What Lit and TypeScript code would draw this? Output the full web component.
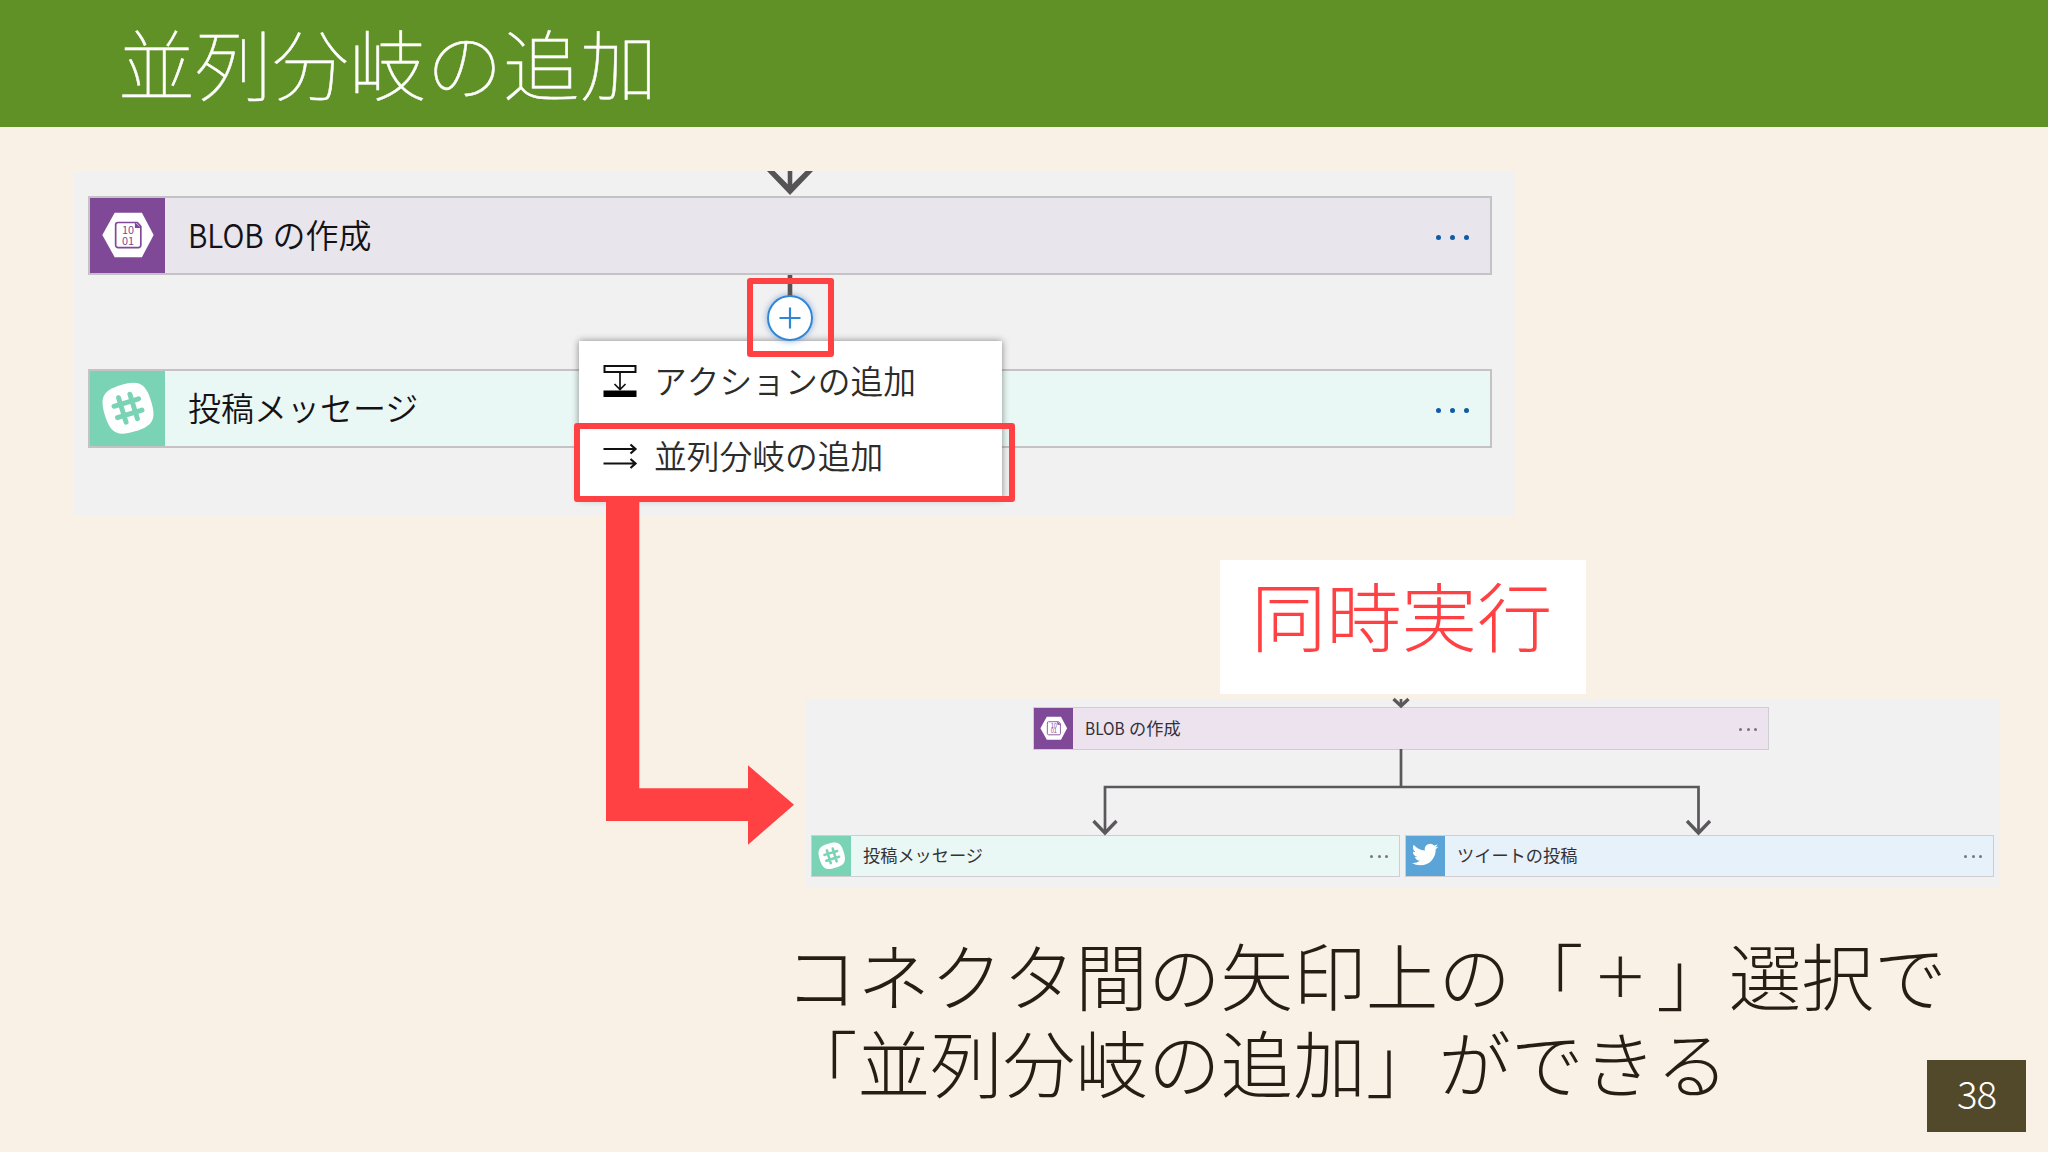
import { LitElement, html, css } from "lit";
import { customElement, property } from "lit/decorators.js";

const blobIcon = html`<svg viewBox="0 0 76 76">
  <path d="M12.500 37.500 25 15h27.600L64.500 37.500 52.600 60H25z" fill="#fff"/>
  <path d="M28.500 24.800h19.500l3.500 4v19a2.500 2.500 0 0 1-2.500 2.500h-20.500a2.500 2.500 0 0 1-2.500-2.500v-20.500a2.500 2.500 0 0 1 2.500-2.500z" fill="none" stroke="#804998" stroke-width="1.700"/>
  <path d="M45.500 24.500v6h6.500z" fill="#804998"/>
  <text x="38.500" y="36.500" class="bits">10</text>
  <text x="38.500" y="47.500" class="bits">01</text>
</svg>`;

const slackIcon = html`<svg viewBox="0 0 76 76">
  <g transform="translate(38.500 37.700) rotate(-17)">
    <path d="M-24.500 0C-24.500-19-19-24.500 0-24.500S24.500-19 24.500 0 19 24.500 0 24.500-24.500 19-24.500 0z" fill="#fff"/>
    <path d="M-6-13V13M6-13V13M-13-6H13M-13 6H13" stroke="#7bd3b6" stroke-width="5" stroke-linecap="round"/>
  </g>
</svg>`;

const twitterIcon = html`<svg viewBox="0 0 76 76">
  <g transform="translate(11.500 9.500) scale(2.150)">
    <path fill="#fff" d="M23.950 4.570a10 10 0 0 1-2.820.770 4.960 4.960 0 0 0 2.160-2.720c-.950.550-2 .950-3.130 1.180a4.920 4.920 0 0 0-8.380 4.480C7.690 8.100 4.070 6.130 1.640 3.160a4.920 4.920 0 0 0 1.520 6.570 4.900 4.900 0 0 1-2.230-.610v.060a4.920 4.920 0 0 0 3.950 4.830 5 5 0 0 1-2.210.080 4.940 4.940 0 0 0 4.600 3.420A9.870 9.870 0 0 1 0 19.540a14 14 0 0 0 7.550 2.210c9.050 0 14-7.500 14-13.980 0-.210 0-.420-.020-.630a9.940 9.940 0 0 0 2.420-2.570z"/>
  </g>
</svg>`;

const icons: Record<string, unknown> = { blob: blobIcon, slack: slackIcon, twitter: twitterIcon };

@customElement("flow-card")
export class FlowCard extends LitElement {
  @property() kind = "blob";
  @property() latin = "";
  @property() label = "";
  @property({ type: Boolean, reflect: true }) small = false;

  static styles = css`
    :host { display: block; --size: 33px; }
    .card {
      display: flex; align-items: center; box-sizing: border-box; height: 100%;
      border: 2px solid #c5c2c5; color: #141216; font-kerning: none;
      font: 400 var(--size)/1 "Noto Sans CJK JP", sans-serif;
    }
    .icon { align-self: stretch; width: 75px; flex: none; display: flex; }
    .icon svg { width: 100%; height: 100%; }
    .bits { font: 400 11px "Noto Sans CJK JP", sans-serif; fill: #804998; text-anchor: middle; }
    .blob { background: #e8e5ec; }
    .slack { background: #e9f8f4; }
    .twitter { background: #e7f1fa; }
    .blob .icon { background: #804998; }
    .slack .icon { background: #7bd3b6; }
    .twitter .icon { background: #5aa4d8; }
    .label { flex: 1; padding: 0 0 2px 23px; white-space: pre; font-weight: 350; }
    .latin { display: inline-block; transform: scaleX(0.9); transform-origin: left; margin-right: -7px; }
    .dots { display: flex; gap: 9px; margin: 4px 21px 0 0; }
    .dots i { width: 5px; height: 5px; border-radius: 50%; background: #115ba4; }
    :host([small]) { --size: 17.200px; }
    :host([small]) .card { border: 1px solid #cfcdd1; color: #333037; }
    :host([small]) .blob { background: #ece3ef; }
    :host([small]) .icon { width: 39px; }
    :host([small]) .label { padding-left: 12px; font-weight: 400; }
    :host([small]) .latin { margin-right: -4px; }
    :host([small]) .dots { gap: 4.500px; margin: 1px 11px 0 0; }
    :host([small]) .dots i { width: 3px; height: 3px; background: #77747c; }
  `;

  render() {
    return html`<div class="card ${this.kind}">
      <div class="icon">${icons[this.kind]}</div>
      <div class="label">${this.latin ? html`<span class="latin">${this.latin}</span> ` : ""}${this.label}</div>
      <div class="dots"><i></i><i></i><i></i></div>
    </div>`;
  }
}

@customElement("app-root")
export class AppRoot extends LitElement {
  static styles = css`
    :host { display: block; }
    .slide {
      position: relative; width: 2048px; height: 1152px; overflow: hidden; font-kerning: none;
      background: #faf1e6; font-family: "Noto Sans CJK JP", sans-serif;
    }
    .title {
      margin: 0; height: 127px; box-sizing: border-box; padding: 0 0 4px 118px;
      display: flex; align-items: center; background: #609127; color: #fff;
      font-size: 77px; font-weight: 100; line-height: 1; -webkit-text-stroke: 0.5px #fff;
    }
    .panel { position: absolute; background: #f2f1f2; box-sizing: border-box; }
    .before { left: 73px; top: 171px; width: 1443px; height: 345px; padding: 25px 24px 0 15px; display: grid; grid-template-rows: 79px 79px; row-gap: 94px; align-content: start; }
    .after { left: 806px; top: 699px; width: 1194px; height: 188px; padding: 8px 6px 0 5px; }
    .after .top { height: 43px; margin: 0 225px 0 222px; }
    .branches { display: grid; grid-template-columns: 589px 589px; column-gap: 5px; height: 42px; margin-top: 85px; }
    .menu {
      position: absolute; left: 579px; top: 341px; width: 423px; height: 158px; box-sizing: border-box;
      background: #fff; box-shadow: 0 0 7px rgba(0,0,0,.45); padding-top: 2px;
    }
    .item { display: flex; align-items: center; height: 75px; padding-left: 23px; gap: 16px; font-size: 32.750px; line-height: 1; color: #2c2c2c; font-weight: 350; }
    .item svg { width: 36px; height: 36px; flex: none; }
    .mark { position: absolute; box-sizing: border-box; border: 6px solid #ff4144; border-radius: 3px; }
    .mark-plus { left: 747px; top: 278px; width: 87px; height: 79px; }
    .mark-item { left: 574px; top: 423px; width: 441px; height: 79px; }
    .lines { position: absolute; left: 0; top: 0; }
    .plus {
      position: absolute; left: 767px; top: 295px; width: 46px; height: 46px; border-radius: 50%;
      box-shadow: 0 0 6px rgba(50,120,200,.6);
    }
    .callout {
      position: absolute; left: 1220px; top: 560px; width: 366px; height: 134px; box-sizing: border-box;
      padding: 16px 0 0 31px; background: #fff; color: #ff4144; font-size: 75.300px; line-height: 1; font-weight: 300; white-space: nowrap;
    }
    .body {
      position: absolute; left: 785px; top: 930px; margin: 0; color: #261e14; white-space: nowrap;
      font-size: 72.600px; line-height: 87.300px; font-weight: 300;
    }
    .sign { display: inline-block; transform: scale(.74); -webkit-text-stroke: 1px #261e14; }
    .page {
      position: absolute; left: 1927px; top: 1060px; width: 99px; height: 72px; box-sizing: border-box;
      display: flex; align-items: center; justify-content: center; padding-bottom: 8px;
      background: #52492b; color: #fff; font-size: 38.500px; line-height: 1; font-weight: 300; letter-spacing: -1px;
    }
  `;

  render() {
    return html`<div class="slide">
      <h1 class="title">並列分岐の追加</h1>

      <section class="panel before">
        <flow-card kind="blob" latin="BLOB" label="の作成"></flow-card>
        <flow-card kind="slack" label="投稿メッセージ"></flow-card>
      </section>

      <section class="panel after">
        <flow-card class="top" small kind="blob" latin="BLOB" label="の作成"></flow-card>
        <div class="branches">
          <flow-card small kind="slack" label="投稿メッセージ"></flow-card>
          <flow-card small kind="twitter" label="ツイートの投稿"></flow-card>
        </div>
      </section>

      <div class="menu">
        <div class="item">
          <svg viewBox="0 0 36 36" fill="none" stroke="#111">
            <path d="M2.500 3h31v6h-31z" stroke-width="2"/>
            <path d="M18 9v17M12.500 21l5.500 5.500 5.500-5.500" stroke-width="1.700"/>
            <path d="M1.500 27.500h33v6.500h-33z" fill="#000" stroke="none"/>
          </svg>
          <span>アクションの追加</span>
        </div>
        <div class="item">
          <svg viewBox="0 0 36 36" fill="none" stroke="#111" stroke-width="2.200">
            <path d="M1.500 11h32M28.500 6.500l5 4.500-5 4.500M1.500 25.500h32M28.500 21l5 4.500-5 4.500"/>
          </svg>
          <span>並列分岐の追加</span>
        </div>
      </div>

      <div class="plus"></div>
      <svg class="lines" width="2048" height="1152" viewBox="0 0 2048 1152" fill="none">
        <g stroke="#555356" stroke-width="4.600">
          <path d="M790 171v20M790 275v21"/>
        </g>
        <path d="M767 171h7.500L790 186.500 805.500 171h7.500L790 195z" fill="#555356"/>
        <circle cx="790" cy="318" r="22" fill="#fff" stroke="#2f86d6" stroke-width="2"/>
        <path d="M779.500 318h21M790 307.500v21" stroke="#2f86d6" stroke-width="2.200"/>
        <g stroke="#5a585b" stroke-width="2.700">
          <path d="M1401 749v38M1105 833v-46h593.500v46M1401 699v7"/>
          <path d="M1093.500 821l11.500 12 11.500-12M1687 821l11.500 12 11.500-12M1393.500 699l7.500 7 7.500-7" stroke-width="3.300"/>
        </g>
        <path d="M606 500h33.300v288.300H748v-23l46 39.400-46 40V821H606z" fill="#ff4144"/>
      </svg>
      <div class="mark mark-plus"></div>
      <div class="mark mark-item"></div>

      <div class="callout">同時実行</div>
      <p class="body">コネクタ間の矢印上の「<span class="sign">＋</span>」選択で<br>「並列分岐の追加」ができる</p>
      <div class="page">38</div>
    </div>`;
  }
}
